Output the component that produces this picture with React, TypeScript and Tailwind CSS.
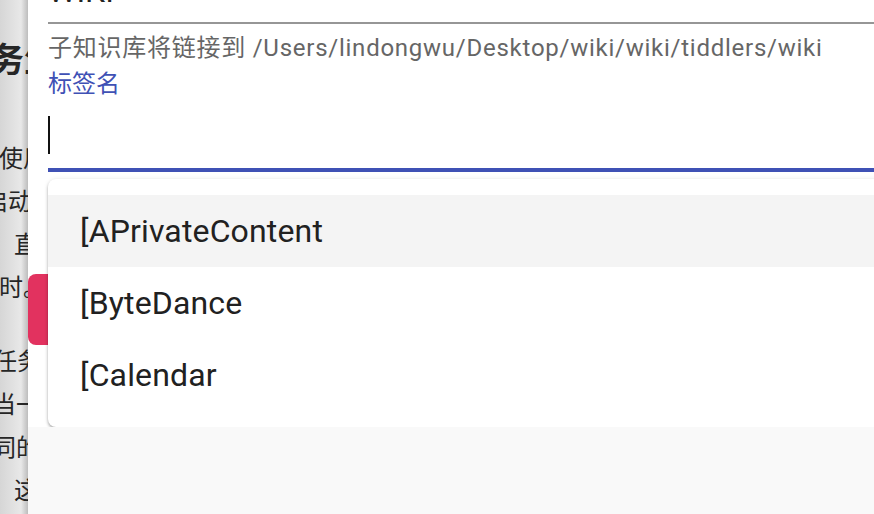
const options = ['[APrivateContent', '[ByteDance', '[Calendar'];

const pageLines: { text: string; cls: string }[] = [
  { text: '使用', cls: 'mt-[58px] ml-[-1px]' },
  { text: '启动', cls: 'ml-[-16px]' },
  { text: '直', cls: 'ml-[14px]' },
  { text: '时。', cls: 'ml-[-1px]' },
  { text: '任务', cls: 'mt-[31px] ml-[-7px]' },
  { text: '当一', cls: 'ml-[-8px]' },
  { text: '同的', cls: 'ml-[-8px]' },
  { text: '这', cls: 'ml-[14px]' },
];

export default function App(): React.JSX.Element {
  return (
    <div className="flex h-[514px] w-[874px] overflow-hidden bg-white font-['Roboto','Noto_Sans_CJK_SC',sans-serif]">
      {/* page behind the dialog, dimmed */}
      <aside className="relative w-[28px] shrink-0 overflow-hidden bg-linear-to-r from-[#d6d6d6] via-[#e8e8e8] via-75% to-[#bdbdbd] text-[#262626]">
        <div className="ml-[-10px] mt-[40px] h-[40px] whitespace-nowrap text-[34px] font-bold leading-[40px]">
          务生
        </div>
        <div className="flex flex-col">
          {pageLines.map((line, i) => (
            <div
              key={i}
              className={`h-[43px] whitespace-nowrap text-[24px] leading-[43px] ${line.cls}`}
            >
              {line.text}
            </div>
          ))}
        </div>
      </aside>

      <main className="flex min-w-0 flex-1 flex-col bg-white">
        <div className="pl-5">
          <div className="-mt-[27px] pb-[13px] text-[32px] leading-[36px] text-[#222]">WIKI</div>
          <div className="h-[2px] bg-[#969696]" />
          <p className="mt-[10px] whitespace-nowrap text-[24px] leading-[28px] tracking-[0.75px] text-[#666]">
            子知识库将链接到 /Users/lindongwu/Desktop/wiki/wiki/tiddlers/wiki
          </p>
          <label className="mt-[8px] block text-[24px] leading-[28px] text-[#3f51b5]">标签名</label>
          <div className="flex h-[70px] items-center pt-[4px]">
            <span className="h-[38px] w-[2px] bg-[#111]" />
          </div>
          <div className="h-[4px] bg-[#3f51b5]" />
        </div>

        <div className="mt-[7px] flex">
          <div className="w-[20px] shrink-0">
            <div className="mt-[95px] h-[71px] rounded-l-lg bg-[#e2325f]" />
          </div>
          <ul className="w-[900px] shrink-0 rounded-lg bg-white py-4 shadow-[0_2px_3px_rgba(0,0,0,0.3),0_0_5px_rgba(0,0,0,0.08)]">
            {options.map((opt, i) => (
              <li
                key={opt}
                className={`flex h-[72px] items-center pl-8 text-[32px] tracking-[0.15px] text-[#212121] ${i === 0 ? 'bg-[#f4f4f4]' : ''}`}
              >
                {opt}
              </li>
            ))}
          </ul>
        </div>
        <div className="flex-1 bg-[#f9f9f9]" />
      </main>
    </div>
  );
}
